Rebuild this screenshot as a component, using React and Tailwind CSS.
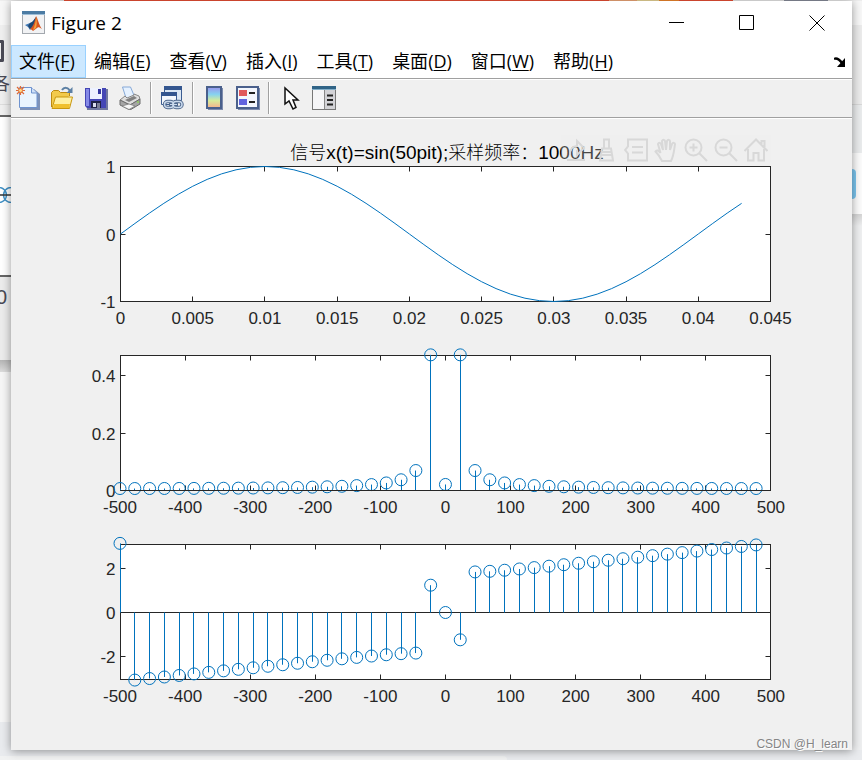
// App.jsx

const MENUS = [
  { label: "文件", key: "F" },
  { label: "编辑", key: "E" },
  { label: "查看", key: "V" },
  { label: "插入", key: "I" },
  { label: "工具", key: "T" },
  { label: "桌面", key: "D" },
  { label: "窗口", key: "W" },
  { label: "帮助", key: "H" },
];

const N = 44;
const FS = 1000;
const BLUE = "#0072BD";
const INK = "#262626";

// sampled signal and its centred spectrum
const signal = Array.from({ length: N }, (_, n) => Math.sin((50 * Math.PI * n) / FS));

const spectrum = Array.from({ length: N }, (_, i) => {
  const k = i - N / 2;
  let re = 0;
  let im = 0;
  signal.forEach((v, n) => {
    re += v * Math.cos((2 * Math.PI * k * n) / N);
    im -= v * Math.sin((2 * Math.PI * k * n) / N);
  });
  // the Nyquist bin is real, drop the rounding noise
  if (k === -N / 2) im = 0;
  return { f: (k * FS) / N, mag: Math.hypot(re, im) / N, phase: Math.atan2(im, re) };
});

// plot box, in canvas units
const LEFT = 109.5;
const WIDTH = 650;
const HEIGHT = 135;

const fx = f => 109 + ((f + 500) / 1000) * 650.9;
const snap = v => Math.floor(v) + 0.5;

const FREQ_TICKS = [-500, -400, -300, -200, -100, 0, 100, 200, 300, 400, 500].map(f => ({
  x: fx(f),
  label: String(f),
}));
const TIME_TICKS = ["0", "0.005", "0.01", "0.015", "0.02", "0.025", "0.03", "0.035", "0.04", "0.045"].map(
  (label, i) => ({ x: LEFT + (i * WIDTH) / 9, label })
);

function Axes({ top, xTicks, yTicks, children }) {
  const bottom = top + HEIGHT;
  const right = LEFT + WIDTH;
  return (
    <g>
      <rect x={LEFT} y={top} width={WIDTH} height={HEIGHT} fill="#fff" stroke={INK} />
      {xTicks.map(t => (
        <g key={t.label}>
          <path d={`M${snap(t.x)} ${top}v5M${snap(t.x)} ${bottom}v-5`} stroke={INK} />
          <text x={t.x} y={bottom + 22} textAnchor="middle" fontSize="17" fill={INK}>{t.label}</text>
        </g>
      ))}
      {yTicks.map(t => (
        <g key={t.label}>
          <path d={`M${LEFT} ${t.y}h5M${right} ${t.y}h-5`} stroke={INK} />
          <text x={LEFT - 5} y={t.y + 6} textAnchor="end" fontSize="17" fill={INK}>{t.label}</text>
        </g>
      ))}
      {children}
    </g>
  );
}

function Stems({ base, scale, field }) {
  return (
    <g fill="none" stroke={BLUE}>
      {spectrum.map(p => {
        const x = fx(p.f);
        const y = base - p[field] * scale;
        return (
          <g key={p.f}>
            <path d={`M${snap(x)} ${base}V${y}`} />
            <circle cx={x} cy={y} r="6" />
          </g>
        );
      })}
    </g>
  );
}

function Plots() {
  const curve = signal
    .map((v, n) => `${n ? "L" : "M"}${LEFT + (n * WIDTH) / 45} ${115 - v * 67.5}`)
    .join("");
  return (
    <svg viewBox="0 0 841 631" className="block w-full font-['Liberation_Sans','Noto_Sans_CJK_SC',sans-serif]">
      <Axes
        top={47.5}
        xTicks={TIME_TICKS}
        yTicks={[{ y: 47.5, label: "1" }, { y: 115.5, label: "0" }, { y: 182.5, label: "-1" }]}
      >
        <path d={curve} fill="none" stroke={BLUE} />
      </Axes>
      <text x="436" y="40" textAnchor="middle" fontSize="19" fill="#000">
        <tspan fontSize="18" className="font-light">信号</tspan>
        <tspan>x(t)=sin(50pit);</tspan>
        <tspan fontSize="18" className="font-light">采样频率：</tspan>
        <tspan>1000Hz</tspan>
      </text>

      <Axes
        top={236.5}
        xTicks={FREQ_TICKS}
        yTicks={[{ y: 256.5, label: "0.4" }, { y: 314.5, label: "0.2" }, { y: 371.5, label: "0" }]}
      >
        <Stems base={371.5} scale={288} field="mag" />
        <path d={`M${LEFT} 371.5h${WIDTH}`} stroke={INK} />
      </Axes>

      <Axes
        top={425.5}
        xTicks={FREQ_TICKS}
        yTicks={[{ y: 449.5, label: "2" }, { y: 493.5, label: "0" }, { y: 537.5, label: "-2" }]}
      >
        <path d={`M${LEFT} 493.5h${WIDTH}`} stroke={INK} />
        <Stems base={493.5} scale={22} field="phase" />
      </Axes>
    </svg>
  );
}

function MatlabIcon() {
  return (
    <svg viewBox="0 0 24 24" className="h-6 w-6">
      <rect x="0.5" y="0.5" width="22" height="22" fill="#f1f2f4" stroke="#a3a8ae" />
      <path d="M0 0h23v3H0z" fill="#4b7ba3" />
      <path d="M0 3h23v1H0z" fill="#9dbdd6" />
      <path d="M3 14l5-2 3-1 3-5-2 9-4 4-2-3z" fill="#3f78b5" />
      <path d="M8 12c3-1 4-4 6-6l-1 8-5 4-2-3z" fill="#20466f" />
      <path d="M14 5c2 3 3 9 6 13-3-2-4-2-5-1l-4 3c-1-1-2-2-3-2 3-2 5-8 6-13z" fill="#d9541e" />
      <path d="M14 6c0 4-1 8-3 13l3-2c1-4 1-8 0-11z" fill="#f3a13a" />
    </svg>
  );
}

function NewIcon() {
  return (
    <svg viewBox="0 0 24 24" className="h-6 w-6">
      <path d="M6 3h12l6 5v16H4V8z" fill="#7f92b8" />
      <path d="M3.5 1.5h12l5.5 5.5v14.500H3.500z" fill="#eaf4ff" stroke="#6f93cf" />
      <path d="M15.5 1.5V7H21" fill="#cfe0f8" stroke="#6f93cf" />
      <path d="M4.5 0v9M0 4.500h9M1 1l7 7M8 1L1 8" stroke="#dd6a3c" strokeWidth="1.2" />
      <circle cx="4.5" cy="4.5" r="2" fill="#ffd78a" stroke="#e07a3f" />
    </svg>
  );
}

function OpenIcon() {
  return (
    <svg viewBox="0 0 24 24" className="h-6 w-6" fill="none">
      <path d="M1.5 21V6.5l2-2h5l2 2h9V10" fill="#f2ca4b" stroke="#bd8a10" />
      <path d="M2 22.5l3.500-11.500h17L19.500 22.500z" fill="#fff0a0" stroke="#c9970f" />
      <path d="M3 22l1-4h16l-1 4z" fill="#f0c02e" />
      <path d="M12 4c2-3 6-3 8 1" stroke="#5d80a4" strokeWidth="2" />
      <path d="M22.5 1v6h-6z" fill="#5d80a4" />
    </svg>
  );
}

function SaveIcon() {
  return (
    <svg viewBox="0 0 24 24" className="h-6 w-6">
      <path d="M2 3h22v21H3z" fill="#70779f" />
      <path d="M1 2h21v20H3l-2-2z" fill="#4446b5" />
      <path d="M2 3h3v17H2z" fill="#8589e6" />
      <path d="M6 2h12v11H6z" fill="#eef2ff" />
      <path d="M14 3h3v5h-3z" fill="#3538a0" />
      <path d="M7 15h10v7H7z" fill="#1f2145" />
      <path d="M9 17h3v4H9z" fill="#d9dcec" />
      <path d="M13 17h3v5h-3z" fill="#7a7d96" />
    </svg>
  );
}

function PrintIcon() {
  return (
    <svg viewBox="0 0 24 24" className="h-6 w-6">
      <path d="M4.5 1h8l4 9.500-8 3z" fill="#e5f1ff" stroke="#86a9d8" />
      <path d="M2 14l5-4 2 2 7-3v-1l5 2 1 3-10 6z" fill="#dedede" stroke="#888" />
      <path d="M2 14l10 5 10-6v5l-10 6-10-5z" fill="#a5a5a5" stroke="#6c6c6c" />
      <path d="M7 14l9-4 3 2-8 4z" fill="#808080" />
      <path d="M4 20l7-2 6 2-6 3.500z" fill="#f6f6f6" stroke="#777" strokeWidth="0.7" />
      <circle cx="20" cy="16" r="1" fill="#8ed15a" />
    </svg>
  );
}

function LinkIcon() {
  return (
    <svg viewBox="0 0 24 24" className="h-6 w-6" fill="none">
      <path d="M4.5 1.5h17v13h-17z" fill="#dbe7f4" stroke="#3b5c91" />
      <path d="M4 0h18v4H4z" fill="#34568f" />
      <path d="M1.5 7.5h15v11h-15z" fill="#f4f8fd" stroke="#3b5c91" />
      <path d="M1 6h16v4H1z" fill="#34568f" />
      <rect x="4.500" y="15.500" width="9" height="6" rx="3" stroke="#4e678c" strokeWidth="3.500" />
      <rect x="13" y="15.500" width="9" height="6" rx="3" stroke="#4e678c" strokeWidth="3.500" />
      <path d="M9 18.500h9" stroke="#4e678c" strokeWidth="3" />
      <rect x="4.500" y="15.500" width="9" height="6" rx="3" stroke="#c9d9ec" strokeWidth="1.500" />
      <rect x="13" y="15.500" width="9" height="6" rx="3" stroke="#c9d9ec" strokeWidth="1.500" />
      <path d="M10 18.500h7" stroke="#c9d9ec" />
    </svg>
  );
}

function ColorbarIcon() {
  return (
    <svg viewBox="0 0 24 24" className="h-6 w-6">
      <defs>
        <linearGradient id="bar" x1="0" y1="0" x2="0" y2="1">
          <stop offset="0" stopColor="#9a93ee" />
          <stop offset="0.35" stopColor="#86d2f0" />
          <stop offset="0.65" stopColor="#d7ec9a" />
          <stop offset="1" stopColor="#f7b08c" />
        </linearGradient>
      </defs>
      <path d="M6 2h15v22H6z" fill="#7d8bad" />
      <rect x="5" y="1" width="14" height="21" fill="url(#bar)" stroke="#4a608c" strokeWidth="2" />
    </svg>
  );
}

function LegendIcon() {
  return (
    <svg viewBox="0 0 24 24" className="h-6 w-6">
      <path d="M2 2h22v22H2z" fill="#7d8bad" />
      <rect x="1" y="1" width="21" height="21" fill="#f3f6fd" stroke="#4a608c" strokeWidth="2" />
      <path d="M3 4h8v6H3z" fill="#e0585c" />
      <path d="M3 13h8v6H3z" fill="#6163de" />
      <path d="M13 7h6M13 16h6" stroke="#222" strokeWidth="2" />
    </svg>
  );
}

function CursorIcon() {
  return (
    <svg viewBox="0 0 24 24" className="h-6 w-6">
      <path d="M7 2v16l4-3 4 8 3-1.500-3-7.500h5z" fill="#fff" stroke="#111" strokeWidth="1.5" />
    </svg>
  );
}

function InspectorIcon() {
  return (
    <svg viewBox="0 0 24 24" className="h-6 w-6">
      <rect x="0.5" y="0.5" width="23" height="23" fill="#f5f5f7" stroke="#777" />
      <path d="M0 0h24v3H0z" fill="#2f6386" />
      <path d="M0 3h24v1H0z" fill="#82aec8" />
      <path d="M13 4h10v19H13z" fill="#d3d3d7" />
      <path d="M12.5 4v19" stroke="#888" />
      <path d="M15 9.5h6M15 14h6M15 18.5h6" stroke="#222" strokeWidth="2" />
    </svg>
  );
}

const TOOL_GROUPS = [
  [["New Figure", NewIcon], ["Open File", OpenIcon], ["Save Figure", SaveIcon], ["Print Figure", PrintIcon]],
  [["Link Plot", LinkIcon]],
  [["Insert Colorbar", ColorbarIcon], ["Insert Legend", LegendIcon]],
  [["Edit Plot", CursorIcon], ["Open Property Inspector", InspectorIcon]],
];

function Toolbar() {
  return (
    <div className="flex h-10 items-center border-y border-[#a0a0a0] bg-[#f0f0f0] shadow-[0_1px_0_#fff,inset_0_1px_0_#fff]">
      {TOOL_GROUPS.map((group, i) => (
        <div key={i} className="flex items-center">
          {i > 0 && <div className="mx-[3px] h-8 w-[2px] border-l border-r border-l-[#a0a0a0] border-r-white" />}
          {group.map(([name, Icon]) => (
            <button key={name} aria-label={name} className="flex h-8 w-[34px] items-center justify-center">
              <Icon />
            </button>
          ))}
        </div>
      ))}
    </div>
  );
}

// faded buttons that float over the first axes
const AXES_TOOLS = [
  ["Export", "M3 22h18M6 17c0-6 3-9 7-9V3l7 7-7 7v-5"],
  ["Brush", "M10 1.5h5v9h-5zM8 10.5h9l2 12H6zM6 17h12M7 14h11"],
  ["Data Tips", "M4 1.5h19v21H4v-7L1 12l3-3.500zM8 9h11M8 14.5h11"],
  ["Pan", "M8 23c-2-4-4-7-6.500-9.500 1-2 3-1 5 1.500L4 6c1-2 2.500-1 3 0l2 6-1-9c1-2 3-1 3 0l1 9 1-9c1-2 3-1 3 0v9l2-6c1-2 3-1 3 0-1 6-1 11-4 17z"],
  ["Zoom In", "M17.5 9.5a8 8 0 1 1-16 0 8 8 0 0 1 16 0zM15.5 15.5L23 23M5.5 9.5h8M9.5 5.5v8"],
  ["Zoom Out", "M17.5 9.5a8 8 0 1 1-16 0 8 8 0 0 1 16 0zM15.5 15.5L23 23M5.5 9.5h8"],
  ["Restore View", "M.5 13L12 1.5 23.5 13M4 11v11.500h5.500V15h5v7.500H20V11M17.5 6V3h3v6"],
];

function AxesToolbar() {
  return (
    <div className="absolute top-4 right-[81px] flex bg-[#f0f0f0]/30">
      {AXES_TOOLS.map(([name, d]) => (
        <button key={name} aria-label={name} className="flex h-[30px] w-[30px] items-center justify-center">
          <svg viewBox="0 0 24 24" className="h-6 w-6" fill="none" stroke="#d8d8d8" strokeWidth="2">
            <path d={d} />
          </svg>
        </button>
      ))}
    </div>
  );
}

function TitleBar() {
  const btn = "flex h-[44px] w-[70px] items-center justify-center";
  return (
    <header className="flex h-[44px] items-center pl-[11px]">
      <MatlabIcon />
      <h1 className="ml-[5px] flex-1 text-[19px] leading-6">Figure 2</h1>
      <button aria-label="Minimize" className={btn}>
        <svg viewBox="0 0 16 16" className="h-4 w-4" stroke="#000"><path d="M0 7.5h15" /></svg>
      </button>
      <button aria-label="Maximize" className={btn}>
        <svg viewBox="0 0 16 16" className="h-4 w-4" fill="none" stroke="#000"><path d="M.5.5h14v14H.5z" /></svg>
      </button>
      <button aria-label="Close" className={btn}>
        <svg viewBox="0 0 16 16" className="h-4 w-4" stroke="#000"><path d="M.5.5l15 15M15.500.5l-15 15" /></svg>
      </button>
    </header>
  );
}

function MenuBar() {
  return (
    <nav className="flex h-[33px] items-stretch text-lg leading-6">
      {MENUS.map((m, i) => (
        <button
          key={m.key}
          className={`border pr-[10px] pb-[2px] pl-[7px] whitespace-nowrap ${i === 0 ? "border-[#99d1ff] bg-[#cce8ff]" : "border-transparent"}`}
        >
          {m.label}(<span className="underline underline-offset-2">{m.key}</span>)
        </button>
      ))}
      <button aria-label="Dock Figure" className="mr-[6px] ml-auto flex items-center">
        <svg viewBox="0 0 12 12" className="h-3 w-3" fill="none">
          <path d="M0 3c3-1.5 5 0 8 4" stroke="#000" strokeWidth="2.5" />
          <path d="M11 2v9H3z" fill="#000" />
        </svg>
      </button>
    </nav>
  );
}

// slivers of the windows lying behind
function LeftEdge() {
  return (
    <div aria-hidden="true" className="flex w-[11px] flex-col overflow-hidden bg-[#f6f6f6] text-[#4a4a55]">
      <div className="h-6 bg-[#f7f7f7]" />
      <div className="h-[80px] border-b border-[#ddd] bg-[#efefef]">
        <div className="mt-[15px] h-[22px] w-1 rounded-r-xs border-y-3 border-r-3 border-[#4a4a55]" />
        <div className="mt-[9px] -ml-2 text-lg leading-6">各</div>
      </div>
      <div className="h-[10px] bg-[#f0f0f0]" />
      <div className="h-[162px] border-y-2 border-[#666] bg-white pt-[70px]">
        <svg viewBox="0 0 11 16" className="h-4 w-[11px]" fill="none" stroke="#3f8fc4" strokeWidth="1.5">
          <circle cx="-1" cy="8" r="7.500" />
          <circle cx="11" cy="8" r="7.500" />
          <path d="M0 8h11" stroke="#333" />
        </svg>
      </div>
      <div className="h-[83px] bg-[#ececec] pt-2 font-['Liberation_Sans',sans-serif] text-xl leading-6">
        <div className="-ml-1">0</div>
      </div>
      <div className="h-3 bg-linear-to-b from-[#b5b5b5] to-[#dcdcdc]" />
      <div className="flex-1" />
      <div className="h-7 bg-[#e9ebee]" />
    </div>
  );
}

function RightEdge() {
  return (
    <div aria-hidden="true" className="flex w-[10px] flex-col overflow-hidden bg-[#eeeff0]">
      <div className="h-6 bg-[#f7f7f7]" />
      <div className="h-[80px] border-b border-[#d8d8d8] bg-[#ebebeb]" />
      <div className="h-[48px] bg-[#e9ebec]" />
      <div className="h-[61px] bg-[#fbfbfb] pt-4">
        <div className="h-[30px] w-1 rounded-r-full bg-[#7cc6f0]" />
      </div>
      <div className="h-3 bg-linear-to-b from-[#d4d4d4] to-[#eeeff0]" />
    </div>
  );
}

export default function App() {
  return (
    <div className="flex min-h-screen flex-col bg-[#e9ebee] font-['Open_Sans','Noto_Sans_CJK_SC',sans-serif] text-black">
      <div aria-hidden="true" className="flex h-px">
        <div className="w-16 bg-[#eee]" />
        <div className="flex-1 bg-[#ef5136]" />
        <div className="w-7 bg-[#f4ab7a]" />
        <div className="w-[22px] bg-[#eeda9a]" />
        <div className="w-5 bg-[#f58a2c]" />
        <div className="w-[54px] bg-[#ef5136]" />
        <div className="w-[51px] bg-[#eee]" />
        <div className="w-11 bg-[#8b8f9d]" />
        <div className="w-[34px] bg-[#eee]" />
      </div>

      <div className="flex flex-1">
        <LeftEdge />
        <main className="relative flex-1 bg-white shadow-[0_1px_9px_rgba(0,0,0,0.4)]">
          <TitleBar />
          <MenuBar />
          <Toolbar />
          <section className="relative border-t border-white bg-[#f0f0f0]">
            <Plots />
            <AxesToolbar />
            <p className="absolute right-1 bottom-0 font-['Liberation_Sans',sans-serif] text-xs leading-3 text-[#858585] [text-shadow:1px_1px_0_#fff]">
              CSDN @H_learn
            </p>
          </section>
        </main>
        <RightEdge />
      </div>

      <div aria-hidden="true" className="flex h-[10px] items-end">
        <div className="h-1 w-[507px] rounded-tr-sm bg-[#f1f2f2]" />
      </div>
    </div>
  );
}
